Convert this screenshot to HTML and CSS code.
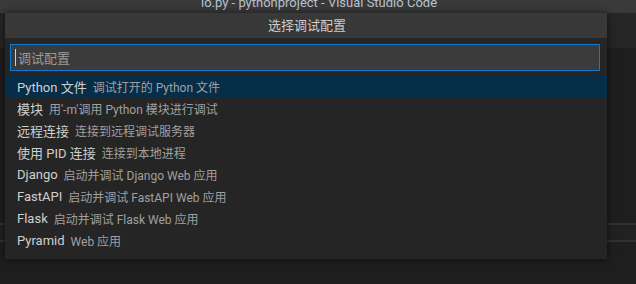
FILE: index.html
```html
<!DOCTYPE html>
<html lang="zh-CN">
<head>
<meta charset="utf-8">
<title>选择调试配置</title>
<link rel="stylesheet" href="styles.css">
</head>
<body>
<div class="window">
  <div class="titlebar"><span class="title-text">lo.py - pythonproject - Visual Studio Code</span></div>
  <div class="tabs"></div>
  <div class="editor">
    <div class="editor-top"></div>
    <div class="panel-line"></div>
    <div class="panel-band"></div>
    <div class="panel-line"></div>
    <div class="editor-bottom"></div>
  </div>
</div>

<div class="quickpick">
  <div class="qp-header">选择调试配置</div>
  <div class="qp-input-wrap">
    <div class="qp-input"><span class="caret"></span><span class="placeholder">调试配置</span></div>
  </div>
  <ul class="qp-list">
    <li class="qp-item selected"><span class="label">Python 文件</span><span class="desc">调试打开的 Python 文件</span></li>
    <li class="qp-item"><span class="label">模块</span><span class="desc">用'-m'调用 Python 模块进行调试</span></li>
    <li class="qp-item"><span class="label">远程连接</span><span class="desc">连接到远程调试服务器</span></li>
    <li class="qp-item"><span class="label">使用 PID 连接</span><span class="desc">连接到本地进程</span></li>
    <li class="qp-item"><span class="label">Django</span><span class="desc">启动并调试 Django Web 应用</span></li>
    <li class="qp-item"><span class="label">FastAPI</span><span class="desc">启动并调试 FastAPI Web 应用</span></li>
    <li class="qp-item"><span class="label">Flask</span><span class="desc">启动并调试 Flask Web 应用</span></li>
    <li class="qp-item"><span class="label">Pyramid</span><span class="desc">Web 应用</span></li>
  </ul>
</div>
</body>
</html>
```

FILE: styles.css
```css
* { box-sizing: border-box; }
html, body {
  margin: 0;
  padding: 0;
  width: 636px;
  height: 284px;
  overflow: hidden;
  background: #1e1e1e;
  font-family: Roboto, "Noto Sans CJK SC", sans-serif;
}
.window {
  display: flex;
  flex-direction: column;
  height: 284px;
}
.titlebar {
  height: 13px;
  background: #3a3a3a;
  overflow: hidden;
  display: flex;
  justify-content: center;
}
.title-text {
  color: #b8c4d0;
  font-size: 13px;
  line-height: 13px;
  margin-top: -4px;
  padding-left: 2px;
}
.tabs {
  height: 35px;
  background: #262626;
}
.editor {
  flex: 1;
  display: flex;
  flex-direction: column;
}
.editor-top { height: 175px; background: #1e1e1e; }
.panel-line { height: 2px; background: #313131; }
.panel-band { height: 15px; background: #212121; }
.editor-bottom { flex: 1; background: #1e1e1e; }

.quickpick {
  position: absolute;
  left: 5px;
  top: 13px;
  width: 602px;
  height: 246px;
  background: #252525;
  box-shadow: 0 0 8px rgba(0, 0, 0, 0.6);
}
.qp-header {
  height: 25px;
  background: #383838;
  color: #cccccc;
  font-size: 13px;
  line-height: 25px;
  text-align: center;
  padding-left: 2px;
}
.qp-input-wrap {
  padding: 6px 7px 4px 5px;
}
.qp-input {
  height: 27px;
  border: 1px solid #0a7bd4;
  background: #3b3b3b;
  display: flex;
  align-items: center;
  padding-left: 4px;
}
.caret {
  width: 1px;
  height: 17px;
  background: #d0d0d0;
  margin-right: 2px;
}
.placeholder {
  color: #9a9a9a;
  font-size: 13px;
}
.qp-list {
  list-style: none;
  margin: 0;
  padding: 0;
}
.qp-item {
  height: 22px;
  display: flex;
  align-items: center;
  padding-left: 12px;
  white-space: nowrap;
}
.qp-item.selected { background: #062e48; }
.label {
  color: #d0d0d0;
  font-size: 13px;
}
.desc {
  color: #a0a0a0;
  font-size: 12px;
  margin-left: 6px;
}
```
